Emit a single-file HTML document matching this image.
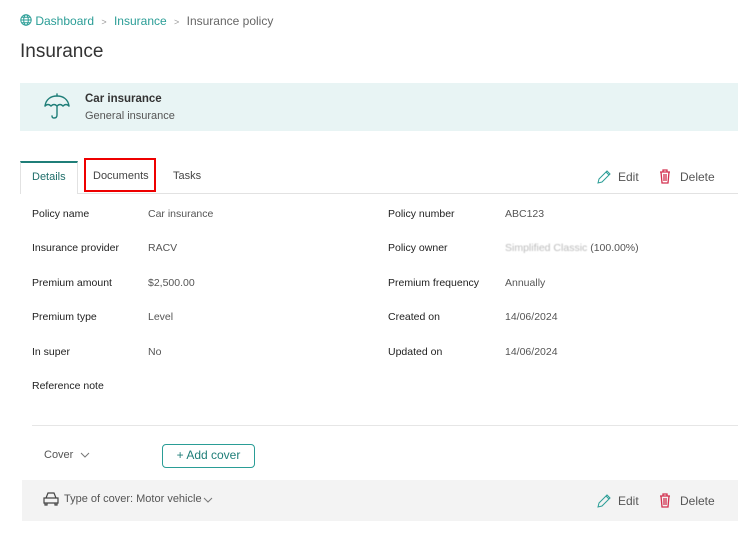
<!DOCTYPE html>
<html><head><style>
*{margin:0;padding:0;box-sizing:border-box}
body{width:755px;height:554px;background:#fff;font-family:"Liberation Sans",sans-serif;color:#333;position:relative;overflow:hidden}
.a{position:absolute;white-space:nowrap}
.lbl{font-size:10.5px;color:#222}
.val{font-size:10.5px;color:#555}
</style></head><body>
<div class="a" style="left:20px;top:14px;font-size:12px;color:#2a9d96">
<svg width="12" height="12" viewBox="0 0 12 12" style="vertical-align:-1px"><g fill="none" stroke="#2a9d96" stroke-width="1"><circle cx="6" cy="6" r="5.2"/><ellipse cx="6" cy="6" rx="2.3" ry="5.2"/><path d="M1 6h10M2 3.3h8M2 8.7h8"/></g></svg> Dashboard <span style="color:#999;font-size:9px;margin:0 4px">&gt;</span> Insurance <span style="color:#999;font-size:9px;margin:0 4px">&gt;</span> <span style="color:#666">Insurance policy</span></div>
<div class="a" style="left:20px;top:41px;font-size:19px;color:#333">Insurance</div>
<div class="a" style="left:20px;top:83px;width:718px;height:48px;background:#e8f4f4"></div>
<svg class="a" style="left:43px;top:93px" width="28" height="28" viewBox="0 0 28 28"><g fill="none" stroke="#1f7e78" stroke-width="1.4" stroke-linecap="round"><path d="M2 13C3 6 8 3 14 3s11 3 12 10"/><path d="M2 13q3-3 6 0q3-3 6 0q3-3 6 0q3-3 6 0"/><path d="M14 1v2M14 13v9q0 3-3 3q-2 0-2-2"/></g></svg>
<div class="a" style="left:85px;top:93px;font-size:11.5px;font-weight:bold;color:#333">Car insurance</div>
<div class="a" style="left:85px;top:110px;font-size:11px;color:#555">General insurance</div>
<div class="a" style="left:20px;top:193px;width:718px;height:1px;background:#e2e2e2"></div>
<div class="a" style="left:20px;top:161px;width:58px;height:33px;border:1px solid #e2e2e2;border-top:2px solid #1f7e78;border-bottom:none;background:#fff"></div>
<div class="a" style="left:32px;top:171px;font-size:11px;color:#1f6e6a">Details</div>
<div class="a" style="left:84px;top:158px;width:72px;height:34px;border:2px solid #e00"></div>
<div class="a" style="left:93px;top:170px;font-size:11px;color:#444">Documents</div>
<div class="a" style="left:173px;top:170px;font-size:11px;color:#444">Tasks</div>
<svg class="a" style="left:597px;top:170px" width="14" height="14" viewBox="0 0 14 14"><path d="M1 13l1-4 8-8 3 3-8 8z M9 2l3 3" fill="none" stroke="#2a9d96" stroke-width="1"/></svg>
<div class="a" style="left:618px;top:170px;font-size:12px;color:#555">Edit</div>
<svg class="a" style="left:659px;top:169px" width="12" height="15" viewBox="0 0 12 15"><g fill="none" stroke="#d3304f" stroke-width="1.3"><path d="M1 3h10M4 3V1h4v2M2 3l1 11h6l1-11M5 5v7M7 5v7"/></g></svg>
<div class="a" style="left:680px;top:170px;font-size:12px;color:#555">Delete</div>

<div class="a lbl" style="left:32px;top:208px">Policy name</div><div class="a val" style="left:148px;top:208px">Car insurance</div>
<div class="a lbl" style="left:32px;top:242px">Insurance provider</div><div class="a val" style="left:148px;top:242px">RACV</div>
<div class="a lbl" style="left:32px;top:277px">Premium amount</div><div class="a val" style="left:148px;top:277px">$2,500.00</div>
<div class="a lbl" style="left:32px;top:311px">Premium type</div><div class="a val" style="left:148px;top:311px">Level</div>
<div class="a lbl" style="left:32px;top:346px">In super</div><div class="a val" style="left:148px;top:346px">No</div>
<div class="a lbl" style="left:32px;top:380px">Reference note</div>
<div class="a lbl" style="left:388px;top:208px">Policy number</div><div class="a val" style="left:505px;top:208px">ABC123</div>
<div class="a lbl" style="left:388px;top:242px">Policy owner</div><div class="a val" style="left:505px;top:242px"><span style="color:#bbb;filter:blur(0.6px)">Simplified Classic</span> (100.00%)</div>
<div class="a lbl" style="left:388px;top:277px">Premium frequency</div><div class="a val" style="left:505px;top:277px">Annually</div>
<div class="a lbl" style="left:388px;top:311px">Created on</div><div class="a val" style="left:505px;top:311px">14/06/2024</div>
<div class="a lbl" style="left:388px;top:346px">Updated on</div><div class="a val" style="left:505px;top:346px">14/06/2024</div>

<div class="a" style="left:32px;top:425px;width:706px;height:1px;background:#e6e6e6"></div>
<div class="a" style="left:44px;top:449px;font-size:11px;color:#555">Cover</div>
<svg class="a" style="left:80px;top:452px" width="10" height="7" viewBox="0 0 10 7"><path d="M1 1l4 4 4-4" fill="none" stroke="#777" stroke-width="1"/></svg>
<div class="a" style="left:162px;top:444px;width:93px;height:24px;border:1px solid #2a9d96;border-radius:4px;font-size:12px;color:#1f7e78;text-align:center;line-height:21px">+ Add cover</div>
<div class="a" style="left:22px;top:480px;width:716px;height:41px;background:#f3f3f3"></div>
<svg class="a" style="left:43px;top:492px" width="16" height="14" viewBox="0 0 16 14"><g fill="none" stroke="#444" stroke-width="1.2"><path d="M3 6l2-5h6l2 5M1 6h14v5H1zM2 11v2h2v-2M12 11v2h2v-2"/></g></svg>
<div class="a" style="left:64px;top:493px;font-size:11px;color:#555">Type of cover: Motor vehicle</div>
<svg class="a" style="left:203px;top:497px" width="10" height="7" viewBox="0 0 10 7"><path d="M1 1l4 4 4-4" fill="none" stroke="#777" stroke-width="1"/></svg>
<svg class="a" style="left:597px;top:494px" width="14" height="14" viewBox="0 0 14 14"><path d="M1 13l1-4 8-8 3 3-8 8z M9 2l3 3" fill="none" stroke="#2a9d96" stroke-width="1"/></svg>
<div class="a" style="left:618px;top:494px;font-size:12px;color:#555">Edit</div>
<svg class="a" style="left:659px;top:493px" width="12" height="15" viewBox="0 0 12 15"><g fill="none" stroke="#d3304f" stroke-width="1.3"><path d="M1 3h10M4 3V1h4v2M2 3l1 11h6l1-11M5 5v7M7 5v7"/></g></svg>
<div class="a" style="left:680px;top:494px;font-size:12px;color:#555">Delete</div>
</body></html>
